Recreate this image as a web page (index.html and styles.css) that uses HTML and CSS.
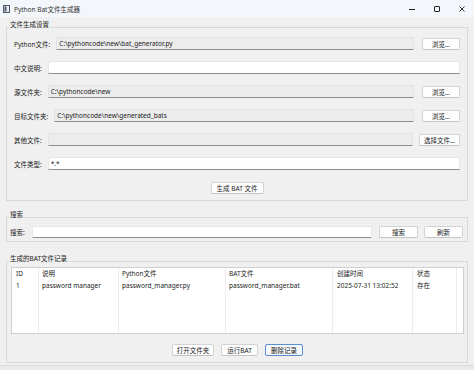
FILE: index.html
```html
<!DOCTYPE html>
<html lang="zh-CN">
<head>
  <meta charset="UTF-8">
  <title>Python Bat文件生成器</title>
  <link rel="stylesheet" href="styles.css">
</head>
<body>
  <div class="window">
    <div class="titlebar">
      <svg class="app-icon" width="7" height="8" viewBox="0 0 7 8">
        <rect x="0.5" y="0.5" width="6" height="7" fill="#eef1f5" stroke="#4d5a6b"/>
        <rect x="1.5" y="1.5" width="2" height="5" fill="#4d5a6b"/>
      </svg>
      <span class="title">Python Bat文件生成器</span>
      <div class="controls">
        <span class="ctl">
          <svg width="8" height="8" viewBox="0 0 8 8"><path d="M1 4.5h6" stroke="#222" stroke-width="1"/></svg>
        </span>
        <span class="ctl">
          <svg width="8" height="8" viewBox="0 0 8 8"><rect x="1.5" y="1.5" width="5" height="5" rx="0.5" fill="none" stroke="#222"/></svg>
        </span>
        <span class="ctl">
          <svg width="8" height="8" viewBox="0 0 8 8"><path d="M1.5 1.5l5 5M6.5 1.5l-5 5" stroke="#222" stroke-width="0.9"/></svg>
        </span>
      </div>
    </div>

    <div class="content">
      <fieldset class="group group-gen">
        <legend>文件生成设置</legend>
        <div class="group-body">
          <div class="row">
            <label>Python文件:</label>
            <input class="entry" type="text" value="C:\pythoncode\new\bat_generator.py" readonly>
            <button class="btn btn-browse">浏览...</button>
          </div>
          <div class="row">
            <label>中文说明:</label>
            <input class="entry white" type="text" value="">
          </div>
          <div class="row">
            <label>源文件夹:</label>
            <input class="entry" type="text" value="C:\pythoncode\new" readonly>
            <button class="btn btn-browse">浏览...</button>
          </div>
          <div class="row">
            <label>目标文件夹:</label>
            <input class="entry" type="text" value="C:\pythoncode\new\generated_bats" readonly>
            <button class="btn btn-browse">浏览...</button>
          </div>
          <div class="row">
            <label>其他文件:</label>
            <input class="entry" type="text" value="" readonly>
            <button class="btn btn-choose">选择文件...</button>
          </div>
          <div class="row">
            <label>文件类型:</label>
            <input class="entry white" type="text" value="*.*">
          </div>
          <div class="actions">
            <button class="btn btn-generate">生成 BAT 文件</button>
          </div>
        </div>
      </fieldset>

      <fieldset class="group group-search">
        <legend>搜索</legend>
        <div class="group-body">
          <div class="row search-row">
            <label>搜索:</label>
            <input class="entry white" type="text" value="">
            <button class="btn btn-search">搜索</button>
            <button class="btn btn-refresh">刷新</button>
          </div>
        </div>
      </fieldset>

      <fieldset class="group group-records">
        <legend>生成的BAT文件记录</legend>
        <div class="group-body">
          <div class="tree">
            <div class="col col-id"><div class="cell">ID</div><div class="cell">1</div></div>
            <div class="col col-desc"><div class="cell">说明</div><div class="cell">password manager</div></div>
            <div class="col col-py"><div class="cell">Python文件</div><div class="cell">password_manager.py</div></div>
            <div class="col col-bat"><div class="cell">BAT文件</div><div class="cell">password_manager.bat</div></div>
            <div class="col col-time"><div class="cell">创建时间</div><div class="cell">2025-07-31 13:02:52</div></div>
            <div class="col col-state"><div class="cell">状态</div><div class="cell">存在</div></div>
            <div class="col col-rest"></div>
          </div>
          <div class="actions bottom-actions">
            <button class="btn btn-open">打开文件夹</button>
            <button class="btn btn-run">运行BAT</button>
            <button class="btn btn-delete focused">删除记录</button>
          </div>
        </div>
      </fieldset>
    </div>
  </div>
</body>
</html>
```

FILE: styles.css
```css
body {
  margin: 0;
  background: #e9e9e9;
  font-family: "Noto Sans", "Noto Sans CJK SC", sans-serif;
  font-size: 6.5px;
  color: #222;
}

.window {
  width: 474px;
  height: 366px;
  background: #f0f0f0;
  border-bottom: 1px solid #dcdcdc;
  box-sizing: border-box;
}

.titlebar {
  height: 17px;
  display: flex;
  align-items: center;
  background: #f3f6fa;
}
.app-icon {
  margin-left: 3px;
}
.title {
  margin-left: 4px;
  color: #333;
}
.controls {
  margin-left: auto;
  display: flex;
  margin-right: 0;
}
.ctl {
  width: 25px;
  height: 17px;
  display: flex;
  align-items: center;
  justify-content: center;
}

.content {
  padding: 4px 6px 0 6px;
}

/* group boxes */
.group {
  margin: 0;
  padding: 0;
  border: 1px solid #d9d9d9;
  min-width: 0;
}
.group legend {
  margin-left: 2px;
  padding: 0 1px 4px 1px;
  line-height: 8px;
}
.group-search {
  margin-top: 10px;
}
.group-records {
  margin-top: 13px;
}

.group-gen .group-body {
  padding: 4px 7px 6px 7px;
}
.group-search .group-body {
  padding: 3px 4px 3px 3px;
}
.group-records .group-body {
  padding: 0 3px 6px 4px;
}

.row {
  display: flex;
  align-items: center;
  height: 13px;
}
.row + .row {
  margin-top: 11px;
}
.row label {
  margin-right: 6px;
  white-space: nowrap;
}

.entry {
  flex: 1;
  min-width: 0;
  height: 13px;
  box-sizing: border-box;
  margin: 0;
  padding: 0 2px;
  font: inherit;
  color: #222;
  background: #ececec;
  border: 1px solid #e2e2e2;
  border-bottom-color: #8e8e8e;
  border-radius: 2px 2px 0 0;
  outline: none;
}
.entry.white {
  background: #fff;
  border-color: #e6e6e6;
  border-bottom-color: #8e8e8e;
}

.btn {
  height: 12px;
  box-sizing: border-box;
  padding: 0;
  margin: 0;
  font: inherit;
  color: #222;
  background: #fdfdfd;
  border: 1px solid #d3d3d3;
  border-bottom-color: #c4c4c4;
  border-radius: 2px;
  white-space: nowrap;
}
.btn.focused {
  background: #f4f8fd;
  border-color: #5a8ed4;
}
.btn-browse { width: 38px; margin-left: 8px; }
.btn-choose { width: 41px; margin-left: 6px; }
.btn-generate { width: 53px; }
.btn-search { width: 39px; margin-left: 7px; }
.btn-refresh { width: 39px; margin-left: 6px; }
.btn-open { width: 42px; }
.btn-run { width: 37px; }
.btn-delete { width: 38px; }

.actions {
  display: flex;
  justify-content: center;
  gap: 8px;
  margin-top: 12px;
}
.search-row {
  height: 12px;
}
.search-row .entry {
  height: 12px;
}
.search-row label {
  margin-right: 7px;
}

/* record list */
.tree {
  display: flex;
  height: 65px;
  background: #fff;
  border: 1px solid #cfcfcf;
}
.col {
  border-right: 1px solid #ececec;
  box-sizing: border-box;
}
.col-id { width: 27px; }
.col-desc { width: 80px; }
.col-py { width: 107px; }
.col-bat { width: 107px; }
.col-time { width: 80px; }
.col-state { width: 44px; }
.col-rest { flex: 1; border-right: none; }
.cell {
  height: 12px;
  line-height: 12px;
  padding-left: 3px;
  white-space: nowrap;
  overflow: hidden;
}
.col-id .cell { padding-left: 4px; }
.col-time .cell,
.col-state .cell { padding-left: 4px; }

.bottom-actions {
  margin-top: 10px;
  gap: 7px;
}
```
